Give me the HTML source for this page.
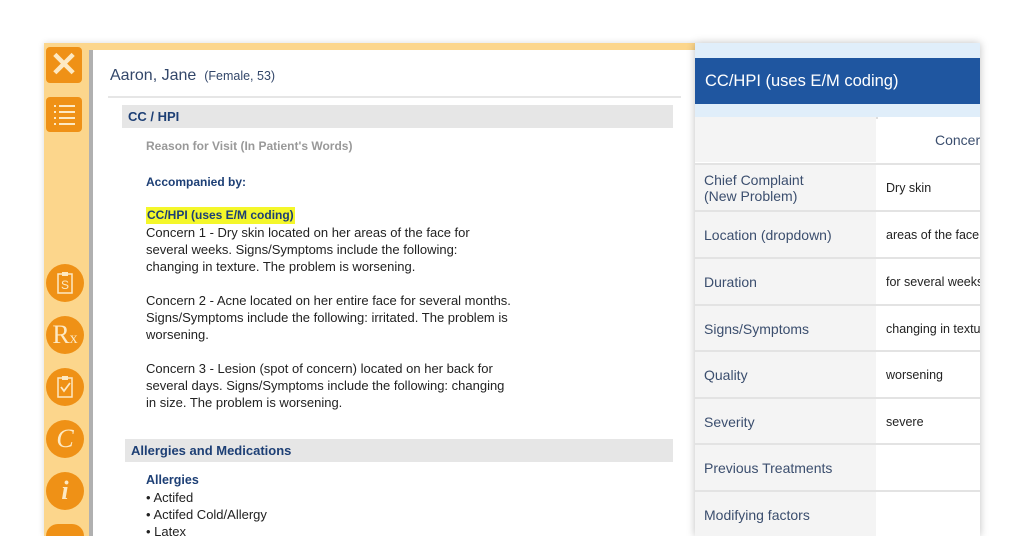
<!DOCTYPE html>
<html style="width:1024px;height:536px;overflow:hidden"><head><meta charset="utf-8"><style>
*{margin:0;padding:0;box-sizing:border-box}
body{width:1024px;height:536px;background:#fff;position:relative;overflow:hidden;font-family:"Liberation Sans",Arial,sans-serif}
.a{position:absolute}
.t{font-size:13px;color:#222;line-height:17px}
.bar{background:#e6e6e6;color:#1d3f75;font-weight:bold;font-size:13px;padding-left:6px;line-height:23px}
.circ{position:absolute;left:46px;width:38px;height:38px;border-radius:50%;background:#ef9116;color:#fde9c3;text-align:center;font-family:"Liberation Serif",serif;font-size:26px;line-height:38px}
.row{position:absolute;left:695px;width:285px;height:47px;border-top:2px solid #e3e3e3}
.row .l{position:absolute;left:0;top:0;width:181px;height:45px;background:#f4f4f4;color:#3b4e6e;font-size:14px;padding:8px 9px;display:flex;align-items:center}
.row .r{position:absolute;left:183px;top:0;width:102px;height:45px;background:#fff;color:#222;font-size:12.5px;padding-left:8px;display:flex;align-items:center;white-space:nowrap;overflow:hidden}
</style></head><body>
<div class="a" style="left:44px;top:43px;width:651px;height:493px;background:#fcd68c;box-shadow:0 0 6px rgba(0,0,0,.15)"></div>
<div class="a" style="left:89px;top:50px;width:4px;height:486px;background:#b0b0b0"></div>
<div class="a" style="left:93px;top:50px;width:602px;height:486px;background:#fff"></div>
<div class="a" style="left:46px;top:47px;width:36px;height:36px;background:#ef9116;border-radius:4px;color:#fde9c3;font-size:34px;line-height:36px;text-align:center;font-weight:bold">✕</div>
<div class="a" style="left:46px;top:97px;width:36px;height:35px;background:#ef9116;border-radius:4px"></div>
<svg class="a" style="left:46px;top:97px" width="36" height="35"><g stroke="#fde9c3" stroke-width="2"><line x1="8" y1="9" x2="10" y2="9"/><line x1="13" y1="9" x2="29" y2="9"/><line x1="8" y1="15" x2="10" y2="15"/><line x1="13" y1="15" x2="29" y2="15"/><line x1="8" y1="21" x2="10" y2="21"/><line x1="13" y1="21" x2="29" y2="21"/><line x1="8" y1="27" x2="10" y2="27"/><line x1="13" y1="27" x2="29" y2="27"/></g></svg>
<svg class="a" style="left:46px;top:264px" width="38" height="38"><circle cx="19" cy="19" r="19" fill="#ef9116"/><rect x="12" y="10" width="14" height="19" fill="none" stroke="#fde9c3" stroke-width="1.5"/><rect x="16" y="8" width="6" height="4" fill="#fde9c3"/><text x="19" y="25" font-size="12" fill="#fde9c3" text-anchor="middle" font-family="Liberation Sans">S</text></svg>
<div class="circ" style="top:316px">R<span style="font-size:16px">x</span></div>
<svg class="a" style="left:46px;top:368px" width="38" height="38"><circle cx="19" cy="19" r="19" fill="#ef9116"/><rect x="12" y="10" width="14" height="19" fill="none" stroke="#fde9c3" stroke-width="1.5"/><rect x="16" y="8" width="6" height="4" fill="#fde9c3"/><path d="M15 19l3 4 6-8" stroke="#fde9c3" stroke-width="1.8" fill="none"/></svg>
<div class="circ" style="top:420px;font-style:italic">C</div>
<div class="circ" style="top:472px;font-style:italic;font-weight:bold">i</div>
<div class="circ" style="top:524px;height:12px;border-radius:19px 19px 0 0"></div>

<div class="a" style="left:110px;top:67px;font-size:16px;color:#33476a">Aaron, Jane <span style="font-size:12.5px">&nbsp;(Female, 53)</span></div>
<div class="a" style="left:108px;top:96px;width:573px;height:2px;background:#e6e6e6"></div>
<div class="a bar" style="left:122px;top:105px;width:551px">CC / HPI</div>
<div class="a t" style="left:146px;top:138px;color:#999;font-weight:bold;font-size:12px">Reason for Visit (In Patient's Words)</div>
<div class="a t" style="left:146px;top:174px;color:#1d3f75;font-weight:bold;font-size:12px">Accompanied by:</div>
<div class="a t" style="left:146px;top:207px;color:#1d3f75;font-weight:bold;font-size:12px;background:#f4f72a;padding:0 1px">CC/HPI (uses E/M coding)</div>
<div class="a t" style="left:146px;top:224px;width:400px">Concern 1 - Dry skin located on her areas of the face for<br>several weeks. Signs/Symptoms include the following:<br>changing in texture. The problem is worsening.<br><br>Concern 2 - Acne located on her entire face for several months.<br>Signs/Symptoms include the following: irritated. The problem is<br>worsening.<br><br>Concern 3 - Lesion (spot of concern) located on her back for<br>several days. Signs/Symptoms include the following: changing<br>in size. The problem is worsening.</div>
<div class="a bar" style="left:125px;top:439px;width:548px">Allergies and Medications</div>
<div class="a t" style="left:146px;top:472px;color:#1d3f75;font-weight:bold;font-size:12.5px">Allergies</div>
<div class="a t" style="left:146px;top:489px">• Actifed<br>• Actifed Cold/Allergy<br>• Latex</div>

<div class="a" style="left:695px;top:43px;width:285px;height:493px;background:#fff;box-shadow:0 0 8px rgba(0,0,0,.25)"></div>
<div class="a" style="left:695px;top:43px;width:285px;height:75px;background:#e0eefa"></div>
<div class="a" style="left:695px;top:58px;width:285px;height:46px;background:#1f56a0;color:#fff;font-size:16.5px;line-height:46px;padding-left:10px">CC/HPI (uses E/M coding)</div>
<div class="a" style="left:695px;top:117px;width:285px;height:2px;background:#ddd"></div>
<div class="row" style="top:117px;border-top:none"><div class="l"></div><div class="r" style="font-size:14px;color:#3b4e6e;padding-left:57px">Concern</div></div>
<div class="row" style="top:163px"><div class="l">Chief Complaint<br>(New Problem)</div><div class="r">Dry skin</div></div>
<div class="row" style="top:210px"><div class="l">Location (dropdown)</div><div class="r">areas of the face</div></div>
<div class="row" style="top:257px"><div class="l">Duration</div><div class="r">for several weeks</div></div>
<div class="row" style="top:304px"><div class="l">Signs/Symptoms</div><div class="r">changing in texture</div></div>
<div class="row" style="top:350px"><div class="l">Quality</div><div class="r">worsening</div></div>
<div class="row" style="top:397px"><div class="l">Severity</div><div class="r">severe</div></div>
<div class="row" style="top:443px"><div class="l">Previous Treatments</div><div class="r"></div></div>
<div class="row" style="top:490px"><div class="l">Modifying factors</div><div class="r"></div></div>
</body></html>
